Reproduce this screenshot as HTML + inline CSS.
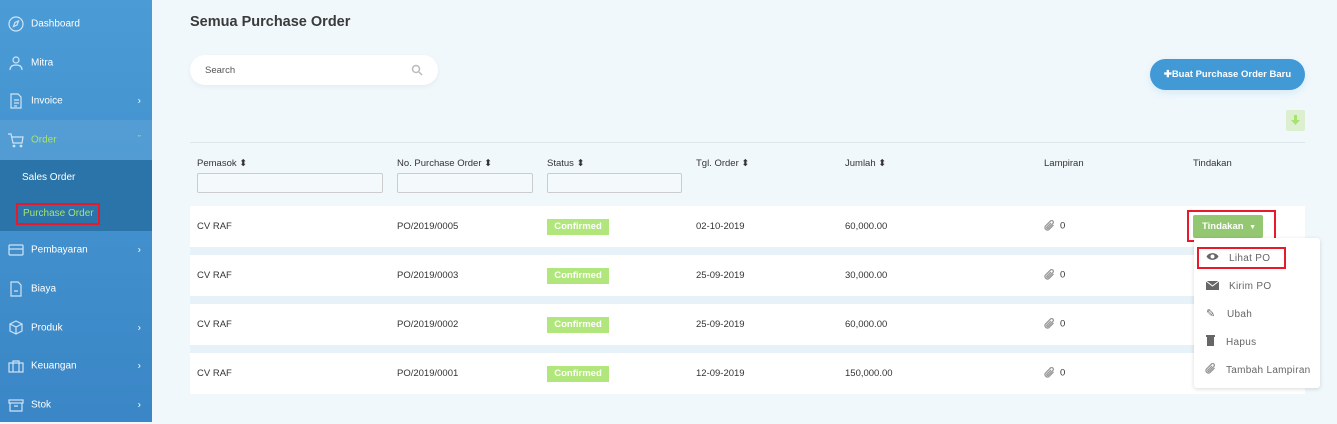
<!DOCTYPE html>
<html><head><meta charset="utf-8"><style>
*{margin:0;padding:0;box-sizing:border-box}
body{width:1337px;height:422px;overflow:hidden;font-family:"Liberation Sans",sans-serif;font-size:10px;color:#333;background:#f1f8fc;position:relative}
.sb{position:absolute;left:0;top:0;width:152px;height:422px;background:linear-gradient(#4a9bd6,#3a86c6)}
.it{position:absolute;left:0;width:152px;height:39px;color:#fff;font-size:10px}
.it span{position:absolute;left:31px;top:50%;transform:translateY(-50%)}
.it svg{position:absolute;left:7px;top:50%;transform:translateY(-50%)}
.it i{position:absolute;right:11px;top:50%;transform:translateY(-50%);font-style:normal;font-size:10px}
.a{position:absolute}
.row{position:absolute;left:190px;width:1115px;height:41px;background:#fff}
.c{position:absolute;font-size:9.5px;color:#333}
.inp{position:absolute;top:173px;height:20px;border:1px solid #ccc;border-radius:2px;background:#f4f9fc}
.badge{position:absolute;left:547px;width:62px;height:16px;background:#b1e67c;color:#fff;font-size:9.5px;font-weight:bold;text-align:center;line-height:16px}
.dd{position:absolute;left:1194px;top:238px;width:126px;height:150px;background:#fff;border-radius:3px;box-shadow:0 1px 4px rgba(0,0,0,.15)}
.dd div{position:absolute;left:0;font-size:10px;color:#666;letter-spacing:.3px}
.clip{display:inline-block;vertical-align:middle;margin-right:4px}
</style></head><body>
<svg width="0" height="0" style="position:absolute"><defs><symbol id="clip" viewBox="0 0 12 12"><path d="M9.5 5L5 9.5a2.5 2.5 0 0 1-3.5-3.5L6.5 1a1.7 1.7 0 0 1 2.4 2.4L4 8.3a.8.8 0 0 1-1.1-1.1L7 3.1" fill="none" stroke="#999" stroke-width="1.3"/></symbol></defs></svg>
<div class="sb">
<div class="it" style="top:4px"><svg width="18" height="18" viewBox="0 0 18 18" fill="none" stroke="#cfe4f5" stroke-width="1.2"><circle cx="9" cy="9" r="7"/><path d="M6.5 11.5l1.5-4 3.5-1.5-1.5 4z"/></svg><span>Dashboard</span></div>
<div class="it" style="top:43px"><svg width="18" height="18" viewBox="0 0 18 18" fill="none" stroke="#cfe4f5" stroke-width="1.2"><circle cx="9" cy="6" r="3"/><path d="M3 16c0-4 3-5 6-5s6 1 6 5"/></svg><span>Mitra</span></div>
<div class="it" style="top:81px"><svg width="18" height="18" viewBox="0 0 18 18" fill="none" stroke="#cfe4f5" stroke-width="1.2"><path d="M4 2h7l3 3v11H4z M7 8h5M7 11h5M7 14h3"/></svg><span>Invoice</span><i>›</i></div>
<div class="it" style="top:120px;height:40px;background:rgba(255,255,255,.08);color:#a6e36f"><svg width="18" height="18" viewBox="0 0 18 18" fill="none" stroke="#cfe4f5" stroke-width="1.2"><path d="M1 3h3l2 9h9l1-6H5"/><circle cx="7" cy="15" r=".8"/><circle cx="14" cy="15" r=".8"/></svg><span>Order</span><i style="color:#a6e36f">ˇ</i></div>
<div class="a" style="left:0;top:160px;width:152px;height:71px;background:#2b74aa"></div>
<div class="a" style="left:22px;top:172px;color:#fff;font-size:10px">Sales Order</div>
<div class="a" style="left:16px;top:203px;width:84px;height:22px;border:2px solid #e8192b"></div>
<div class="a" style="left:23px;top:208px;color:#a6e36f;font-size:10px">Purchase Order</div>
<div class="it" style="top:230px"><svg width="18" height="18" viewBox="0 0 18 18" fill="none" stroke="#cfe4f5" stroke-width="1.2"><rect x="2" y="4" width="14" height="10" rx="1"/><path d="M2 8h14"/></svg><span>Pembayaran</span><i>›</i></div>
<div class="it" style="top:269px"><svg width="18" height="18" viewBox="0 0 18 18" fill="none" stroke="#cfe4f5" stroke-width="1.2"><path d="M4 2h7l3 3v11H4z M7 11h4"/></svg><span>Biaya</span></div>
<div class="it" style="top:308px"><svg width="18" height="18" viewBox="0 0 18 18" fill="none" stroke="#cfe4f5" stroke-width="1.2"><path d="M9 2l6 3v7l-6 3-6-3V5z M3 5l6 3 6-3 M9 8v7"/></svg><span>Produk</span><i>›</i></div>
<div class="it" style="top:346px"><svg width="18" height="18" viewBox="0 0 18 18" fill="none" stroke="#cfe4f5" stroke-width="1.2"><rect x="2" y="6" width="14" height="9"/><path d="M6 6V4h6v2M6 6v9M12 6v9"/></svg><span>Keuangan</span><i>›</i></div>
<div class="it" style="top:385px"><svg width="18" height="18" viewBox="0 0 18 18" fill="none" stroke="#cfe4f5" stroke-width="1.2"><rect x="2" y="4" width="14" height="3"/><path d="M3 7v8h12V7M7 10h4"/></svg><span>Stok</span><i>›</i></div>
</div>

<div class="a" style="left:190px;top:14px;font-size:14.5px;font-weight:bold;color:#3a3a3a">Semua Purchase Order</div>
<div class="a" style="left:190px;top:55px;width:248px;height:30px;background:#fff;border-radius:15px;box-shadow:0 2px 6px rgba(0,0,0,.05)"><span class="a" style="left:15px;top:10px;font-size:9.5px;color:#555">Search</span><svg class="a" style="left:221px;top:9px" width="12" height="12" viewBox="0 0 12 12" fill="none" stroke="#bbb" stroke-width="1.5"><circle cx="5" cy="5" r="3.5"/><path d="M8 8l3 3"/></svg></div>
<div class="a" style="left:1150px;top:59px;width:155px;height:31px;background:#4199d6;border-radius:16px;color:#fff;font-weight:bold;font-size:9.5px;text-align:center;line-height:31px;box-shadow:0 3px 8px rgba(65,153,214,.15)">✚Buat Purchase Order Baru</div>
<div class="a" style="left:1286px;top:110px;width:19px;height:21px;background:#dcf0d0;border-radius:2px"><svg class="a" style="left:4px;top:5px" width="11" height="11" viewBox="0 0 11 11"><path d="M4 0h3v5h3L5.5 10 1 5h3z" fill="#a6e36f"/></svg></div>
<div class="a" style="left:190px;top:142px;width:1115px;height:1px;background:#dde6eb"></div>

<div class="c" style="left:197px;top:158px">Pemasok ⬍</div>
<div class="c" style="left:397px;top:158px">No. Purchase Order ⬍</div>
<div class="c" style="left:547px;top:158px">Status ⬍</div>
<div class="c" style="left:696px;top:158px">Tgl. Order ⬍</div>
<div class="c" style="left:845px;top:158px">Jumlah ⬍</div>
<div class="c" style="left:1044px;top:158px">Lampiran</div>
<div class="c" style="left:1193px;top:158px">Tindakan</div>
<div class="inp" style="left:197px;width:186px"></div>
<div class="inp" style="left:397px;width:136px"></div>
<div class="inp" style="left:547px;width:135px"></div>

<div class="a" style="left:190px;top:247px;width:1115px;height:147px;background:#e6f1f8"></div>
<div class="row" style="top:206px"></div>
<div class="row" style="top:255px"></div>
<div class="row" style="top:304px"></div>
<div class="row" style="top:353px"></div>

<div class="c" style="left:197px;top:221px">CV RAF</div><div class="c" style="left:397px;top:221px">PO/2019/0005</div><div class="badge" style="top:219px">Confirmed</div><div class="c" style="left:696px;top:221px">02-10-2019</div><div class="c" style="left:845px;top:221px">60,000.00</div><div class="c" style="left:1044px;top:220px"><svg class="clip" width="12" height="12"><use href="#clip"/></svg>0</div>
<div class="c" style="left:197px;top:270px">CV RAF</div><div class="c" style="left:397px;top:270px">PO/2019/0003</div><div class="badge" style="top:268px">Confirmed</div><div class="c" style="left:696px;top:270px">25-09-2019</div><div class="c" style="left:845px;top:270px">30,000.00</div><div class="c" style="left:1044px;top:269px"><svg class="clip" width="12" height="12"><use href="#clip"/></svg>0</div>
<div class="c" style="left:197px;top:319px">CV RAF</div><div class="c" style="left:397px;top:319px">PO/2019/0002</div><div class="badge" style="top:317px">Confirmed</div><div class="c" style="left:696px;top:319px">25-09-2019</div><div class="c" style="left:845px;top:319px">60,000.00</div><div class="c" style="left:1044px;top:318px"><svg class="clip" width="12" height="12"><use href="#clip"/></svg>0</div>
<div class="c" style="left:197px;top:368px">CV RAF</div><div class="c" style="left:397px;top:368px">PO/2019/0001</div><div class="badge" style="top:366px">Confirmed</div><div class="c" style="left:696px;top:368px">12-09-2019</div><div class="c" style="left:845px;top:368px">150,000.00</div><div class="c" style="left:1044px;top:367px"><svg class="clip" width="12" height="12"><use href="#clip"/></svg>0</div>

<div class="a" style="left:1193px;top:215px;width:70px;height:23px;background:#94c772;border-radius:2px;color:#fff;font-weight:bold;font-size:9.5px;line-height:23px;padding-left:9px">Tindakan <span style="font-size:7px;margin-left:3px">▼</span></div>
<div class="a" style="left:1187px;top:210px;width:89px;height:32px;border:2px solid #e8192b"></div>
<div class="dd">
<div style="top:14px;left:12px"><svg width="13" height="9" viewBox="0 0 13 9"><path d="M0.5 4.5C3 0 10 0 12.5 4.5 10 9 3 9 .5 4.5z" fill="#666"/><circle cx="6.5" cy="4.5" r="2" fill="#fff"/></svg></div><div style="top:15px;left:35px">Lihat PO</div>
<div style="top:43px;left:12px"><svg width="13" height="9"><rect width="13" height="9" fill="#666"/><path d="M0 0l6.5 5L13 0" stroke="#fff" fill="none"/></svg></div><div style="top:43px;left:35px">Kirim PO</div>
<div style="top:69px;left:12px;font-size:11px">✎</div><div style="top:71px;left:33px">Ubah</div>
<div style="top:97px;left:12px"><svg width="9" height="11"><rect x="1" y="2" width="7" height="9" fill="#666"/><rect x="0" y="0" width="9" height="2" fill="#666"/></svg></div><div style="top:99px;left:32px">Hapus</div>
<div style="top:125px;left:11px"><svg width="12" height="12"><use href="#clip"/></svg></div><div style="top:127px;left:32px">Tambah Lampiran</div>
</div>
<div class="a" style="left:1197px;top:247px;width:89px;height:22px;border:2px solid #e8192b"></div>
</body></html>
